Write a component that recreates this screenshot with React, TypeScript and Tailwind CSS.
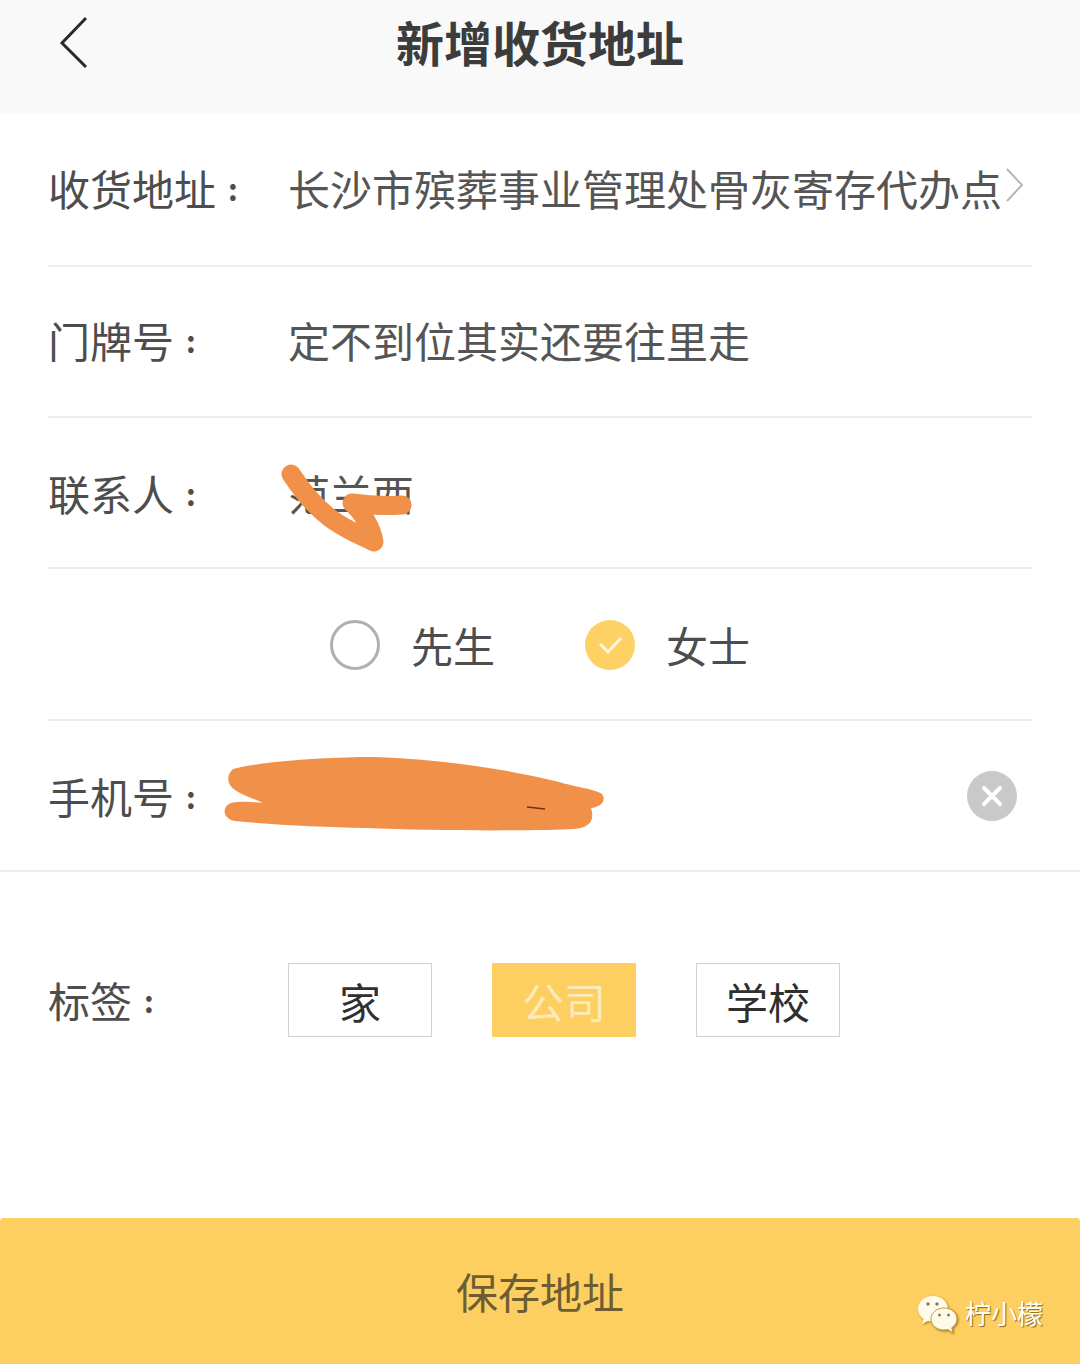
const font = { fontFamily: '"Noto Sans CJK SC", "Noto Sans", sans-serif' };

const Label = ({ text }: { text: string }) => (
  <div className="w-[240px] shrink-0 flex items-center text-[42px] leading-none text-[#4d4d4d]">
    {text}
    <span className="ml-3 font-bold text-[30px]">:</span>
  </div>
);

const Tag = ({ text, active }: { text: string; active?: boolean }) => (
  <div
    className={
      active
        ? 'w-[144px] h-[74px] flex items-center justify-center text-[42px] bg-[#fdcf60] text-[#fdeab8]'
        : 'w-[144px] h-[74px] flex items-center justify-center text-[42px] bg-white border border-[#d2d2d2] text-[#2f2f2f]'
    }
  >
    {text}
  </div>
);

const WeChatLogo = () => (
  <svg width="42" height="40" viewBox="0 0 42 40" className="drop-shadow-[1px_1px_1px_rgba(120,80,0,0.7)]">
    <path d="M16 1C7.5 1 1 6.800 1 14c0 4.200 2.200 7.600 5.600 10L5 29l6-3c1.600.5 3.200.8 5 .8 8.500 0 15-5.800 15-12.800S24.500 1 16 1z" fill="#fffbea" />
    <path d="M27 13c-7.200 0-13 4.900-13 11s5.800 11 13 11c1.300 0 2.600-.2 3.800-.5L36 38l-1.300-5.200c3.300-2 5.300-5.200 5.300-8.800 0-6.100-5.800-11-13-11z" fill="#fffbea" stroke="#c99a3a" strokeWidth="1" />
    <circle cx="11" cy="9" r="1.700" fill="#8a7a50" />
    <circle cx="20" cy="9" r="1.700" fill="#8a7a50" />
    <circle cx="22.500" cy="20" r="1.500" fill="#8a7a50" />
    <circle cx="31.500" cy="20" r="1.500" fill="#8a7a50" />
  </svg>
);

export default function App() {
  return (
    <div className="relative w-[1080px] h-[1364px] flex flex-col bg-white overflow-hidden" style={font}>
      {/* header */}
      <div className="relative h-[114px] shrink-0 bg-[#f9f9f9] flex items-center justify-center pb-[33px]">
        <svg width="40" height="60" viewBox="0 0 40 60" className="absolute left-[55px] top-[14px]">
          <path d="M31 4 L7 29 L31 53" fill="none" stroke="#2a2a2a" strokeWidth="3" />
        </svg>
        <span className="text-[48px] font-bold leading-none text-[#3c3c3c]">新增收货地址</span>
      </div>

      {/* address */}
      <div className="h-[153px] mx-12 shrink-0 flex items-center border-b-2 border-[#ececec] pb-1">
        <Label text="收货地址" />
        <span className="text-[42px] leading-none whitespace-nowrap text-[#555555]">长沙市殡葬事业管理处骨灰寄存代办点</span>
        <svg width="22" height="40" viewBox="0 0 22 40" className="ml-[2px] -mt-1 shrink-0">
          <path d="M3 3 L18 19 L3 35" fill="none" stroke="#b5b5b5" strokeWidth="2" />
        </svg>
      </div>

      <div className="h-[151px] mx-12 shrink-0 flex items-center border-b-2 border-[#ececec] pb-1">
        <Label text="门牌号" />
        <span className="text-[42px] leading-none text-[#555555]">定不到位其实还要往里走</span>
      </div>

      {/* contact */}
      <div className="relative h-[151px] mx-12 shrink-0 flex items-center border-b-2 border-[#ececec]">
        <Label text="联系人" />
        <span className="text-[42px] leading-none text-[#555555]">范兰西</span>
        <svg width="140" height="100" viewBox="0 0 140 100" className="absolute left-[230px] top-[42px]">
          <path
            d="M13 14 C24 30 34 44 52 58 C68 70 84 76 96 82 C94 68 84 52 74 43 C88 45 110 46 124 45"
            fill="none"
            stroke="#f19149"
            strokeWidth="19"
            strokeLinecap="round"
            strokeLinejoin="round"
          />
        </svg>
      </div>

      {/* gender */}
      <div className="h-[152px] mx-12 shrink-0 flex items-center justify-center border-b-2 border-[#ececec] pt-[2px]">
        <div className="w-[50px] h-[50px] rounded-full border-[3px] border-[#b0b0b0]" />
        <span className="ml-[31px] text-[42px] leading-none text-[#4d4d4d]">先生</span>
        <div className="ml-[90px] w-[50px] h-[50px] rounded-full bg-[#fdd163] flex items-center justify-center">
          <svg width="30" height="24" viewBox="0 0 30 24">
            <path d="M5 11 L13 19 L26 5" fill="none" stroke="#fff6dc" strokeWidth="3" />
          </svg>
        </div>
        <span className="ml-[31px] text-[42px] leading-none text-[#4d4d4d]">女士</span>
      </div>

      {/* phone */}
      <div className="relative h-[151px] shrink-0 flex items-center px-12 border-b-2 border-[#ececec]">
        <Label text="手机号" />
        <div className="ml-auto mr-[15px] w-[50px] h-[50px] rounded-full bg-[#c9c9c9] flex items-center justify-center">
          <svg width="26" height="26" viewBox="0 0 26 26">
            <path d="M5 5 L21 21 M21 5 L5 21" stroke="#ffffff" strokeWidth="4" strokeLinecap="round" />
          </svg>
        </div>
        <svg width="400" height="90" viewBox="0 0 400 90" className="absolute left-[215px] top-[28px]">
          <path
            d="M18 20 C50 12 110 8 160 8 C220 10 280 18 340 32 C360 38 380 40 387 45 C392 52 385 58 376 59 C379 68 378 78 360 80 C320 82 220 82 150 79 C110 78 60 76 20 72 C8 70 6 58 16 54 C26 52 38 53 48 54 C36 48 18 44 14 34 C12 28 14 24 18 20 Z"
            fill="#f19149"
          />
          <path d="M312 58 L330 60" stroke="#6a3412" strokeWidth="1.500" />
        </svg>
      </div>

      {/* tags */}
      <div className="mt-[91px] px-12 flex items-center">
        <Label text="标签" />
        <div className="flex gap-[60px]">
          <Tag text="家" />
          <Tag text="公司" active />
          <Tag text="学校" />
        </div>
      </div>

      {/* save */}
      <div className="relative mt-auto h-[146px] shrink-0 bg-[#fdcf60] rounded-t-sm flex items-center justify-center">
        <span className="text-[42px] leading-none text-[#6e5d33]">保存地址</span>
        <div className="absolute left-[917px] top-[77px] flex items-center gap-[6px]">
          <WeChatLogo />
          <span className="text-[26px] leading-none text-white -mt-1 [text-shadow:1px_1px_1px_rgba(110,75,0,0.8)]">柠小檬</span>
        </div>
      </div>
    </div>
  );
}
